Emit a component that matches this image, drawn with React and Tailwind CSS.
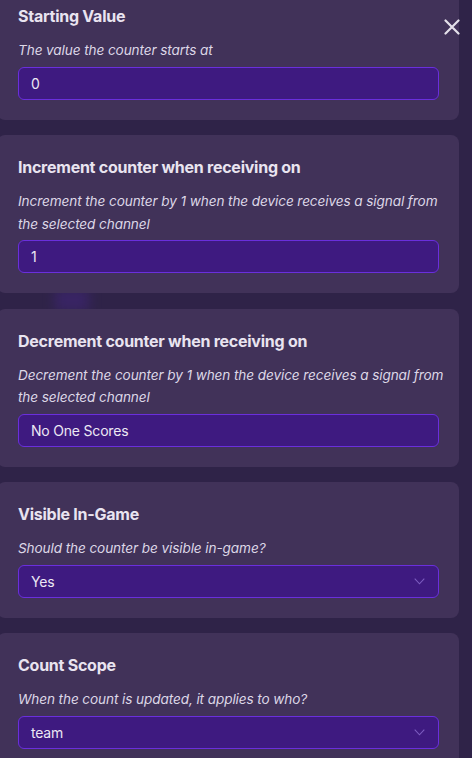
import React from "react";

const cards = [
  { title: "Starting Value", desc: ["The value the counter starts at"], value: "0", select: false },
  { title: "Increment counter when receiving on", desc: ["Increment the counter by 1 when the device receives a signal from", "the selected channel"], value: "1", select: false },
  { title: "Decrement counter when receiving on", desc: ["Decrement the counter by 1 when the device receives a signal from", "the selected channel"], value: "No One Scores", select: false },
  { title: "Visible In-Game", desc: ["Should the counter be visible in-game?"], value: "Yes", select: true },
  { title: "Count Scope", desc: ["When the count is updated, it applies to who?"], value: "team", select: true },
];

function Card({ title, desc, value, select }) {
  return (
    <div className="w-[462px] -ml-[3px] rounded-lg bg-[#413259] pt-[20px] pb-[20px] pl-[21px] pr-[20px]">
      <div className="text-[16px] leading-[24px] font-bold text-[#e9e4f0] tracking-[-0.25px] whitespace-nowrap">{title}</div>
      <div className="mt-[11px] text-[13.6px] leading-[22.5px] italic text-[#ddd7e7] tracking-[-0.1px] whitespace-nowrap">
        {desc.map((d, i) => (
          <div key={i}>{d}</div>
        ))}
      </div>
      <div className="mt-[5px] h-[33px] w-[421px] rounded-md border border-[#6a2fdc] bg-[#3e1a80] flex items-center justify-between pl-[12px] pr-[13px]">
        <span className="text-[14px] text-[#ece8f4] tracking-[-0.2px]">{value}</span>
        {select && (
          <svg width="11" height="7" viewBox="0 0 11 7" fill="none">
            <path d="M0.7 0.7 L5.5 5.8 L10.3 0.7" stroke="#7c5cbf" strokeWidth="1.1" />
          </svg>
        )}
      </div>
    </div>
  );
}

export default function App() {
  return (
    <div
      className="relative w-[472px] h-[758px] overflow-hidden bg-[#2f2348]"
      style={{ fontFamily: "Inter, 'Noto Sans', sans-serif" }}
    >
      <div className="absolute left-[55px] top-[288px] w-[34px] h-[24px] bg-[#3d2570] blur-[6px] opacity-70" />
      <div className="relative -mt-[16px] flex flex-col gap-[15.5px]">
        {cards.map((c, i) => (
          <Card key={i} {...c} />
        ))}
      </div>
      <button className="absolute left-[443px] top-[18px] w-[18px] h-[18px] flex items-center justify-center">
        <svg width="16" height="16" viewBox="0 0 16 16" fill="none">
          <path d="M1.5 1.5 L14.5 14.5 M14.5 1.5 L1.5 14.5" stroke="#e4e0ea" strokeWidth="2.2" strokeLinecap="round" />
        </svg>
      </button>
    </div>
  );
}
